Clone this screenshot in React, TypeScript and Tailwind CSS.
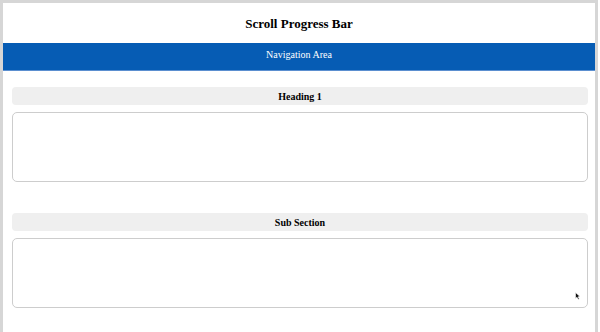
export default function App() {
  const sections = ["Heading 1", "Sub Section"];

  return (
    <div className="w-[600px] h-[332px] overflow-hidden bg-white relative" style={{ fontFamily: '"Liberation Serif", "Times New Roman", serif' }}>
      <div className="w-[598px] h-[340px] border-[3px] border-b-0 border-[#d6d6d6]">
        {/* Title */}
        <div className="h-[40px] flex items-center justify-center pt-[1px]">
          <h1 className="text-[13px] font-bold text-black">Scroll Progress Bar</h1>
        </div>

        {/* Nav */}
        <div className="h-[28px] bg-[#065cb4] border-b border-[#5b8fd0] text-white text-[10px] text-center pt-[4px]">
          Navigation Area
        </div>

        {/* Sections */}
        <div className="pl-[9px] pr-[7px] pt-[16px] flex flex-col gap-[31px]">
          {sections.map((title) => (
            <div key={title} className="flex flex-col gap-[7px]">
              <div className="h-[18px] rounded-[4px] bg-[#efefef] flex items-center justify-center text-[10px] font-bold text-black">
                {title}
              </div>
              <div className="h-[70px] rounded-[5px] border border-[#cdcdcd] bg-white" />
            </div>
          ))}
        </div>
      </div>

      {/* mouse pointer */}
      <svg className="absolute left-[575px] top-[292px]" width="6" height="8" viewBox="0 0 6 8">
        <path d="M0.5 0.5 L0.5 6.5 L2 5.2 L3.2 7.6 L4.3 7.1 L3.1 4.8 L5 4.6 Z" fill="#111" stroke="#fff" strokeWidth="0.6" />
      </svg>
    </div>
  );
}
